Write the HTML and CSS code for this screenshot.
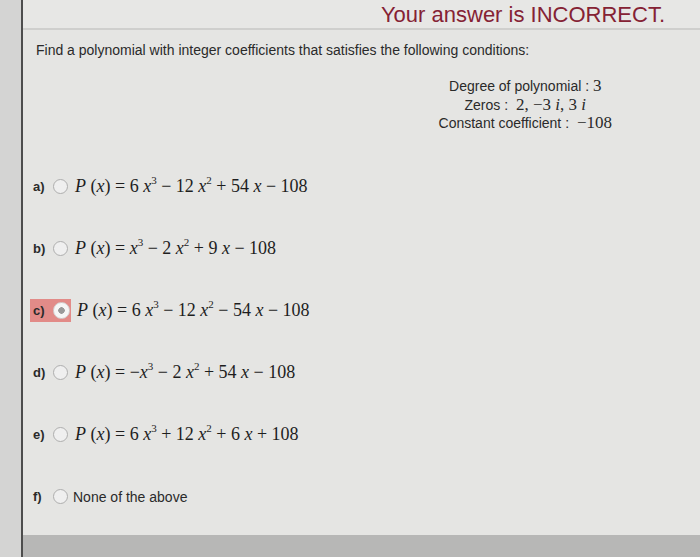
FILE: index.html
```html
<!DOCTYPE html>
<html>
<head>
<meta charset="utf-8">
<link rel="stylesheet" href="styles.css">
</head>
<body>
<div class="page">
  <div class="sidebar"></div>
  <div class="main">
    <div class="header"><span class="verdict">Your answer is INCORRECT.</span></div>
    <div class="content">
      <p class="question">Find a polynomial with integer coefficients that satisfies the following conditions:</p>
      <div class="conditions">
        <div class="cond">Degree of polynomial : <span class="m">3</span></div>
        <div class="cond">Zeros : <span class="m gap">2, &minus;3 <i>i</i>, 3 <i>i</i></span></div>
        <div class="cond">Constant coefficient : <span class="m gap">&minus;108</span></div>
      </div>
      <div class="options">
        <div class="opt">
          <span class="pick"><span class="lbl">a)</span><span class="radio"></span></span>
          <span class="m formula"><i>P</i> (<i>x</i>) = 6 <i>x</i><sup>3</sup> &minus; 12 <i>x</i><sup>2</sup> + 54 <i>x</i> &minus; 108</span>
        </div>
        <div class="opt">
          <span class="pick"><span class="lbl">b)</span><span class="radio"></span></span>
          <span class="m formula"><i>P</i> (<i>x</i>) = <i>x</i><sup>3</sup> &minus; 2 <i>x</i><sup>2</sup> + 9 <i>x</i> &minus; 108</span>
        </div>
        <div class="opt">
          <span class="pick chosen"><span class="lbl">c)</span><span class="radio on"></span></span>
          <span class="m formula"><i>P</i> (<i>x</i>) = 6 <i>x</i><sup>3</sup> &minus; 12 <i>x</i><sup>2</sup> &minus; 54 <i>x</i> &minus; 108</span>
        </div>
        <div class="opt">
          <span class="pick"><span class="lbl">d)</span><span class="radio"></span></span>
          <span class="m formula"><i>P</i> (<i>x</i>) = &minus;<i>x</i><sup>3</sup> &minus; 2 <i>x</i><sup>2</sup> + 54 <i>x</i> &minus; 108</span>
        </div>
        <div class="opt">
          <span class="pick"><span class="lbl">e)</span><span class="radio"></span></span>
          <span class="m formula"><i>P</i> (<i>x</i>) = 6 <i>x</i><sup>3</sup> + 12 <i>x</i><sup>2</sup> + 6 <i>x</i> + 108</span>
        </div>
        <div class="opt">
          <span class="pick"><span class="lbl">f)</span><span class="radio"></span></span>
          <span class="plain">None of the above</span>
        </div>
      </div>
    </div>
    <div class="footer"></div>
  </div>
</div>
</body>
</html>
```

FILE: styles.css
```css
html, body {
  margin: 0;
  padding: 0;
}
body {
  background: #d7d7d6;
  font-family: "Liberation Sans", Arial, sans-serif;
  color: #2a2a2a;
}
.page {
  display: flex;
  width: 700px;
  height: 557px;
  overflow: hidden;
}
.sidebar {
  width: 21px;
  flex: none;
  background: #d4d4d3;
  border-right: 2px solid #4d4d4d;
}
.main {
  flex: 1;
  display: flex;
  flex-direction: column;
  background: #e5e5e3;
}
.header {
  height: 28px;
  border-bottom: 2px solid #cfcfcd;
  background: #e7e7e5;
  display: flex;
  justify-content: flex-end;
  align-items: flex-end;
  padding-right: 35px;
}
.verdict {
  color: #852234;
  font-size: 22px;
  line-height: 27px;
}
.content {
  flex: 1;
  display: flex;
  flex-direction: column;
  padding: 11px 0 0 0;
}
.question {
  margin: 0 0 0 13px;
  font-size: 14px;
  line-height: 18px;
}
.conditions {
  align-self: flex-end;
  margin: 18px 88px 0 0;
  display: flex;
  flex-direction: column;
  align-items: center;
  font-size: 14px;
  line-height: 18.5px;
}
.m {
  font-family: "Liberation Serif", "Times New Roman", serif;
  font-size: 17px;
}
.m i {
  font-style: italic;
}
.m.gap {
  margin-left: 4px;
}
.options {
  display: flex;
  flex-direction: column;
  gap: 38px;
  margin: 42px 0 0 7px;
}
.opt {
  display: flex;
  align-items: center;
  height: 24px;
}
.pick {
  display: flex;
  align-items: center;
  gap: 7px;
  height: 23px;
  padding: 0 1px 0 3px;
}
.pick.chosen {
  background: #e28b88;
}
.lbl {
  font-weight: bold;
  font-size: 13px;
  width: 13px;
}
.radio {
  width: 15px;
  height: 15px;
  border-radius: 50%;
  border: 1px solid #aeaeae;
  background: #efefef;
  box-sizing: border-box;
}
.radio.on {
  width: 17px;
  height: 17px;
  background: radial-gradient(circle, #9a9a9a 0 3px, #f6f6f6 3.5px);
  border-color: #d2d2d2;
}
.formula {
  margin-left: 6px;
  font-size: 18px;
  color: #1e1e1e;
}
.formula sup {
  font-size: 11px;
  line-height: 0;
  vertical-align: 8px;
}
.plain {
  margin-left: 4px;
  font-size: 14px;
}
.footer {
  height: 22px;
  flex: none;
  background: #b7b7b6;
}
```
